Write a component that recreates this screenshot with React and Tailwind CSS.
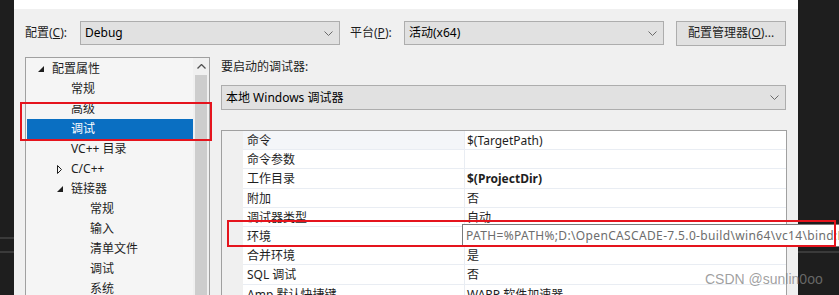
import React from 'react'

const font = { fontFamily: '"Noto Sans", "Noto Sans CJK SC", sans-serif' }

function Chevron() {
  return (
    <svg width="9" height="5" viewBox="0 0 9 5" className="shrink-0">
      <path d="M0.5 0.5 L4.5 4.5 L8.5 0.5" fill="none" stroke="#6a6a6a" strokeWidth="1" />
    </svg>
  )
}

function Combo({ text, className }) {
  return (
    <div className={`shrink-0 flex items-center justify-between bg-[#e1e1e1] border border-[#adadad] pl-[4px] pr-[6px] ${className}`}>
      <span className="text-[12px] text-black leading-none">{text}</span>
      <Chevron />
    </div>
  )
}

function TriOpen() {
  return (
    <svg width="6" height="6" viewBox="0 0 6 6" className="shrink-0">
      <path d="M6 0 L6 6 L0 6 Z" fill="#1e1e1e" />
    </svg>
  )
}

function TriClosed() {
  return (
    <svg width="5" height="9" viewBox="0 0 5 9" className="shrink-0">
      <path d="M0.5 0.5 L4.5 4.5 L0.5 8.5 Z" fill="none" stroke="#1e1e1e" strokeWidth="1" />
    </svg>
  )
}

const tree = [
  { label: '配置属性', level: 0, icon: 'open' },
  { label: '常规', level: 1 },
  { label: '高级', level: 1 },
  { label: '调试', level: 1, selected: true },
  { label: 'VC++ 目录', level: 1 },
  { label: 'C/C++', level: 1, icon: 'closed' },
  { label: '链接器', level: 1, icon: 'open' },
  { label: '常规', level: 2 },
  { label: '输入', level: 2 },
  { label: '清单文件', level: 2 },
  { label: '调试', level: 2 },
  { label: '系统', level: 2 },
]

const props = [
  { name: '命令', value: '$(TargetPath)', first: true },
  { name: '命令参数', value: '' },
  { name: '工作目录', value: '$(ProjectDir)', bold: true },
  { name: '附加', value: '否' },
  { name: '调试器类型', value: '自动' },
  { name: '环境', value: '' },
  { name: '合并环境', value: '是' },
  { name: 'SQL 调试', value: '否' },
  { name: 'Amp 默认快捷键', value: 'WARP 软件加速器' },
]

function TreeRow({ item }) {
  const textPad = item.level === 0 ? 'pl-[25px]' : item.level === 1 ? 'pl-[44px]' : 'pl-[63px]'
  const iconLeft = item.level === 0 ? 'left-[11px]' : 'left-[30px]'
  return (
    <div
      className={`relative shrink-0 flex items-center h-[20px] ${textPad} ${
        item.selected ? 'bg-[#0a6fc2] text-white' : 'text-[#1e1e1e]'
      }`}
    >
      {item.icon && (
        <span className={`absolute ${iconLeft} top-0 h-full flex items-center`}>
          {item.icon === 'open' ? <TriOpen /> : <TriClosed />}
        </span>
      )}
      <span className="text-[12px] leading-none">{item.label}</span>
    </div>
  )
}

export default function App() {
  return (
    <div className="relative w-[839px] h-[295px] overflow-hidden flex bg-[#1e1e1e]" style={font}>
      {/* left dark strip */}
      <div className="w-[14px] shrink-0 flex flex-col">
        <div className="h-[237px] shrink-0" />
        <div className="h-[2px] shrink-0 bg-[#3a3a3a]" />
        <div className="h-[12px] shrink-0" />
        <div className="h-[2px] shrink-0 bg-[#3a3a3a]" />
      </div>

      {/* dialog */}
      <div className="w-[784px] shrink-0 flex flex-col bg-[#f0f0f0]">
        <div className="h-[9px] shrink-0 bg-white" />

        <div className="shrink-0 flex items-center h-[26px] mt-[11px] pl-[11px]">
          <span className="w-[55px] text-[12px] text-[#1e1e1e]">
            配置(<span className="underline">C</span>):
          </span>
          <Combo text="Debug" className="w-[260px] h-[24px]" />
          <span className="ml-[10px] w-[54px] text-[12px] text-[#1e1e1e]">
            平台(<span className="underline">P</span>):
          </span>
          <Combo text="活动(x64)" className="w-[260px] h-[24px]" />
          <div className="ml-[12px] w-[110px] h-[25px] flex items-center justify-center bg-[#e1e1e1] border border-[#adadad] text-[12px] text-[#1e1e1e]">
            配置管理器(<span className="underline">O</span>)...
          </div>
        </div>

        <div className="shrink-0 flex items-start mt-[11px] pl-[11px]">
          {/* tree */}
          <div className="shrink-0 w-[185px] h-[260px] border border-[#a0a0a0] bg-[#f5f5f5] flex">
            <div className="flex-1 flex flex-col pt-[1px] pl-[1px]">
              {tree.map((t, i) => (
                <TreeRow key={i} item={t} />
              ))}
            </div>
            <div className="w-[16px] flex flex-col bg-[#f0f0f0]">
              <div className="h-[17px] shrink-0 flex items-center justify-center">
                <svg width="9" height="5" viewBox="0 0 9 5">
                  <path d="M0.5 4.5 L4.5 0.5 L8.5 4.5" fill="none" stroke="#505050" strokeWidth="1.3" />
                </svg>
              </div>
              <div className="flex-1 mx-[2px] bg-[#cdcdcd]" />
            </div>
          </div>

          {/* right side */}
          <div className="shrink-0 ml-[11px] w-[566px] flex flex-col">
            <div className="shrink-0 h-[20px] pt-[1px] leading-[18px] text-[12px] text-[#1e1e1e]">要启动的调试器:</div>
            <Combo text="本地 Windows 调试器" className="mt-[8px] h-[25px] w-[565px]" />
            <div className="shrink-0 mt-[20px] border border-[#a0a0a0] bg-white flex flex-col">
              {props.map((p, i) => (
                <div key={i} className="flex h-[19.2px] shrink-0">
                  <div className="w-[21px] bg-[#f0f0f0]" />
                  <div
                    className={`w-[222px] flex items-center pl-[4px] pt-[2px] border-b border-r border-[#e9edf3] text-[12px] text-[#1e1e1e] ${
                      p.first ? 'bg-[#f4f6f9]' : 'bg-white'
                    }`}
                  >
                    {p.name}
                  </div>
                  <div
                    className={`flex-1 flex items-center pl-[2px] pt-[2px] border-b border-[#e9edf3] text-[12px] text-[#1e1e1e] ${
                      p.bold ? 'font-bold' : ''
                    }`}
                  >
                    {p.value}
                  </div>
                </div>
              ))}
            </div>
          </div>
        </div>
      </div>

      {/* right dark area */}
      <div className="flex-1 flex flex-col">
        <div className="h-[251px] shrink-0" />
        <div className="h-[2px] shrink-0 bg-[#3a3a3a]" />
      </div>

      {/* tooltip for 环境 */}
      <div className="absolute left-[462px] top-[224px] h-[23px] w-[400px] bg-white border border-[#7a7a7a] flex items-center pl-[3px] pt-[1px] whitespace-nowrap text-[12px] tracking-[0.35px] text-[#6d6d6d]">
        PATH=%PATH%;D:\OpenCASCADE-7.5.0-build\win64\vc14\bind;D:\OpenCASCADE
      </div>

      {/* red highlight boxes */}
      <div className="absolute left-[20px] top-[102px] w-[192px] h-[39px] border-2 border-[#e5141d]" />
      <div className="absolute left-[227px] top-[220px] w-[609px] h-[27px] border-2 border-[#e5141d]" />

      {/* watermark */}
      <div className="absolute left-[705px] top-[270px] text-[14px] leading-[18px] text-[rgba(128,128,128,0.75)] whitespace-nowrap" style={{ fontFamily: '"Liberation Sans", sans-serif' }}>
        CSDN @sunlin0oo
      </div>
    </div>
  )
}
